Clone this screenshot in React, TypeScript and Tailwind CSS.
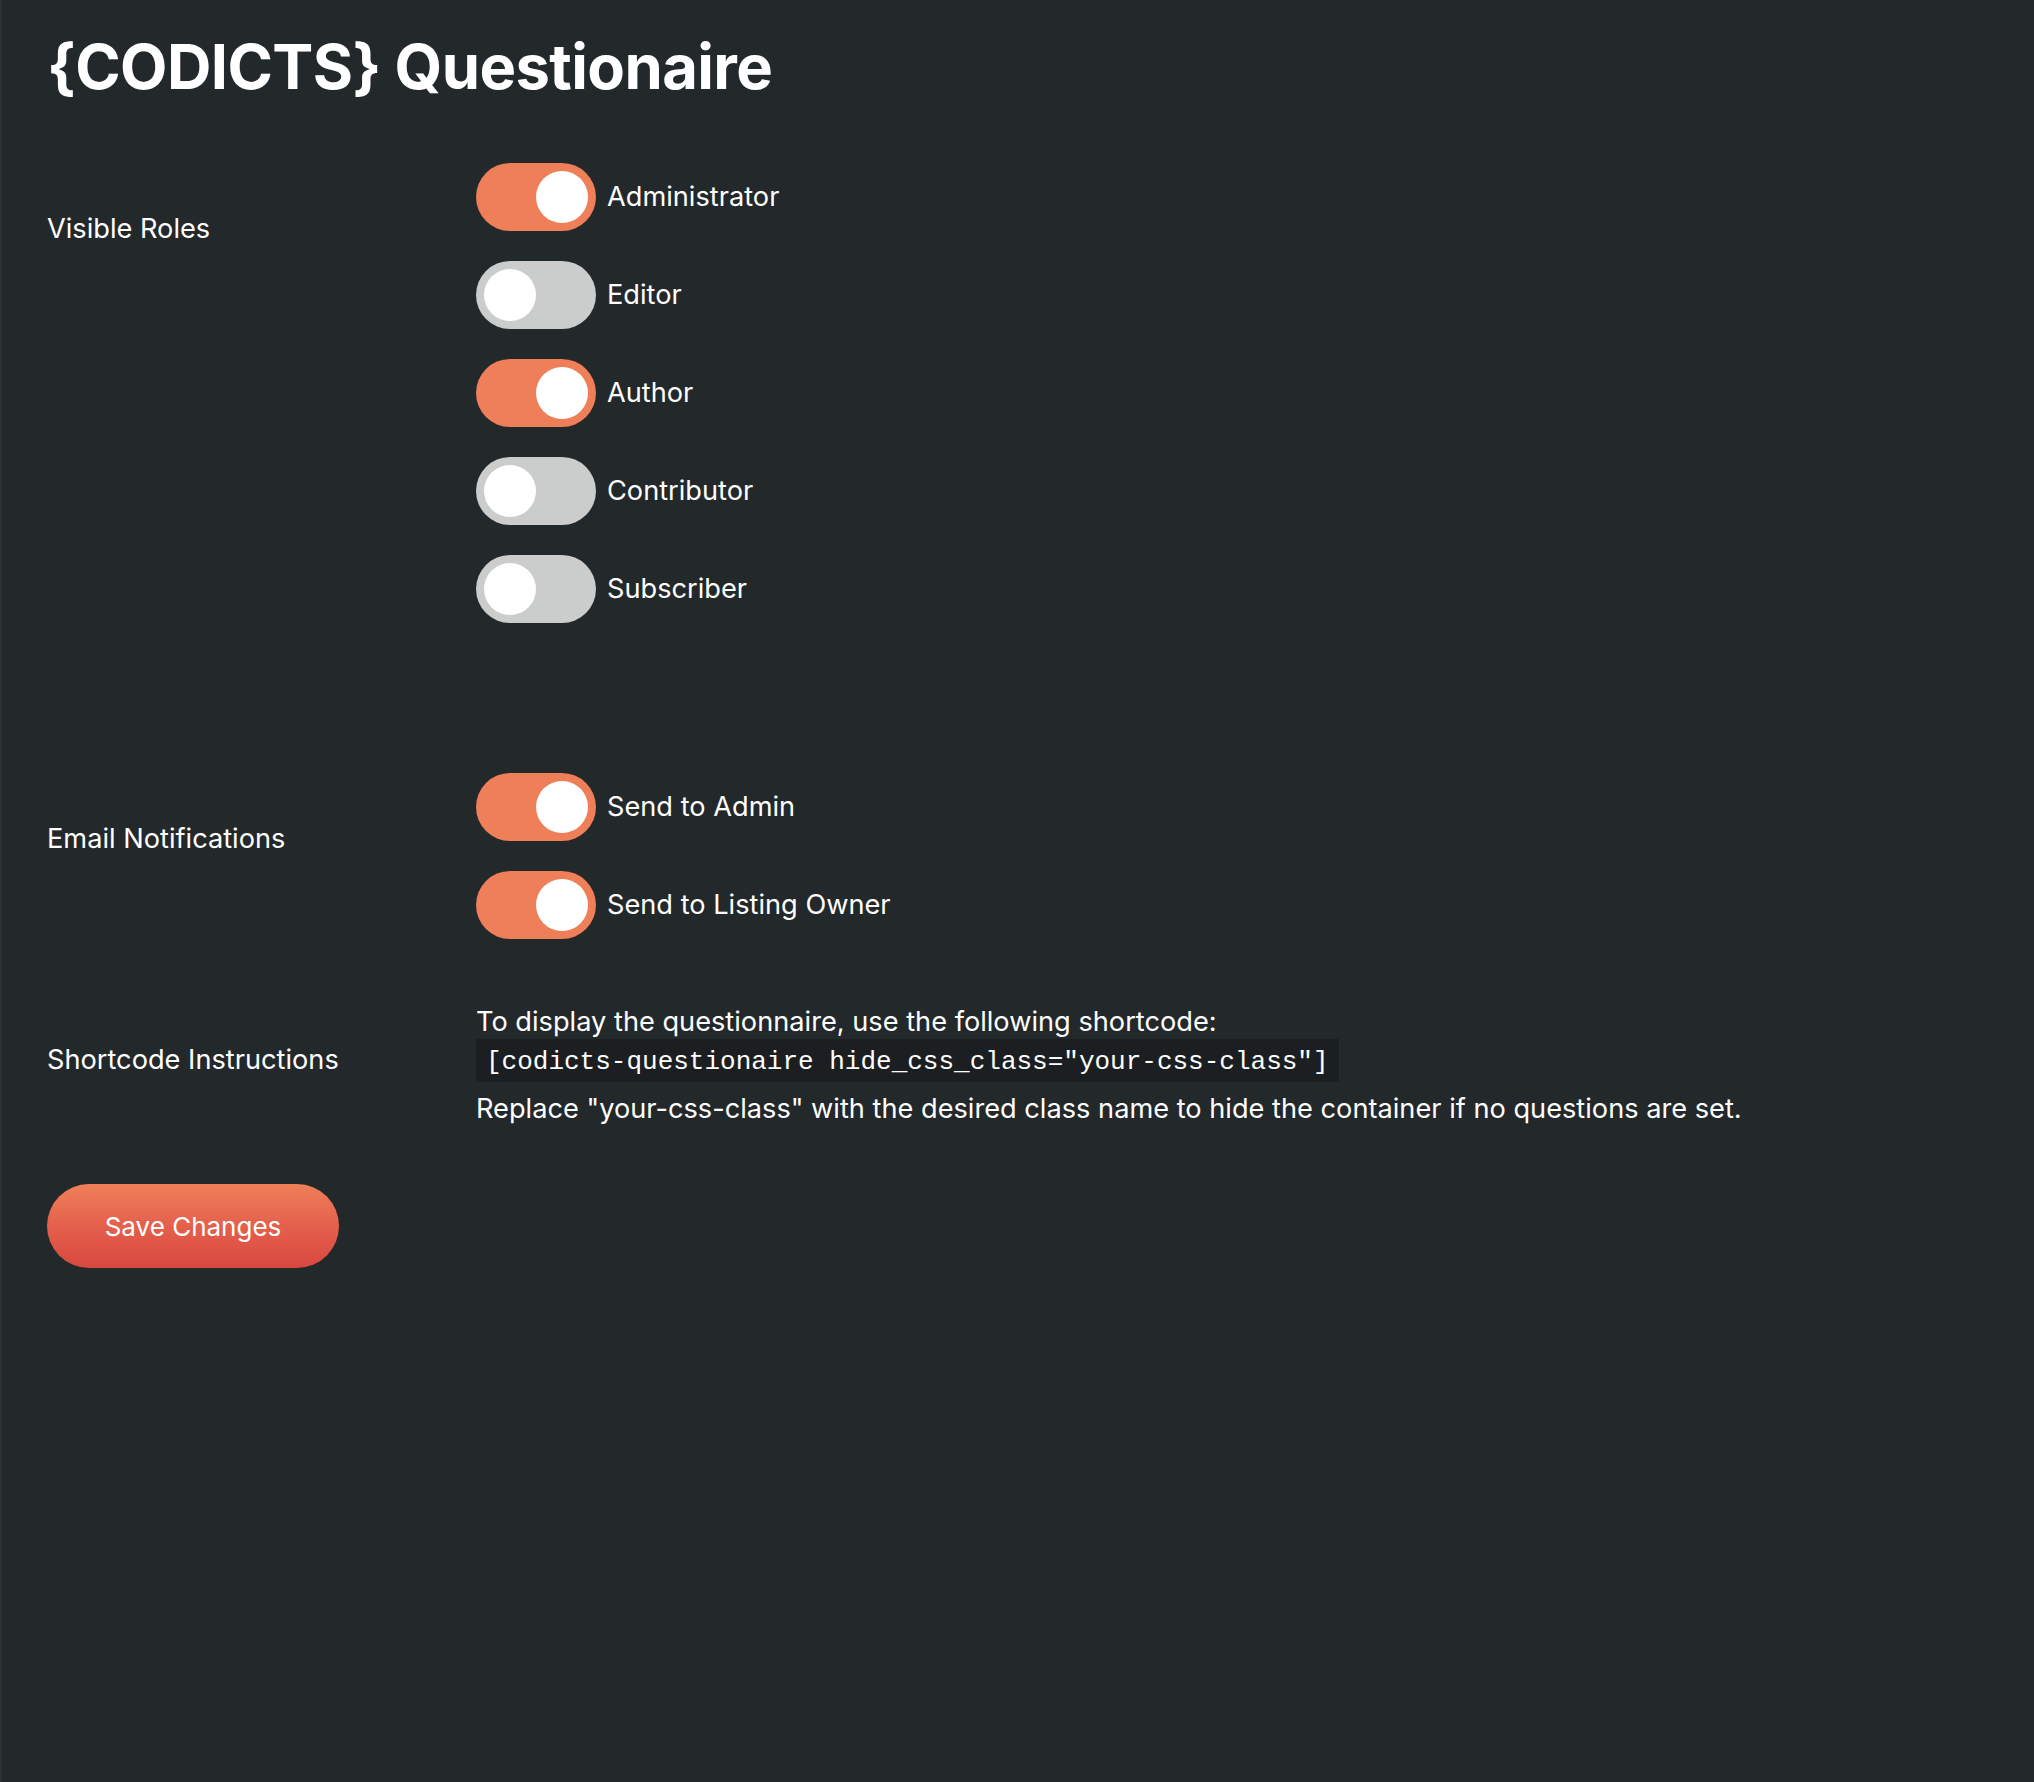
import React, { useState } from 'react';

// トグルの項目
const roleOptions = [
  { key: 'administrator', label: 'Administrator', on: true },
  { key: 'editor', label: 'Editor', on: false },
  { key: 'author', label: 'Author', on: true },
  { key: 'contributor', label: 'Contributor', on: false },
  { key: 'subscriber', label: 'Subscriber', on: false },
];

const emailOptions = [
  { key: 'admin', label: 'Send to Admin', on: true },
  { key: 'owner', label: 'Send to Listing Owner', on: true },
];

const Toggle: React.FC<{ label: string; checked: boolean; onChange: () => void }> = ({ label, checked, onChange }) => {
  return (
    <label className="flex items-center gap-[11px] cursor-pointer select-none">
      <button
        type="button"
        onClick={onChange}
        className={`flex h-[68px] w-[120px] shrink-0 items-center rounded-full px-[8px] ${
          checked ? 'justify-end bg-[#ef7f59]' : 'justify-start bg-[#cbcdcc]'
        }`}
      >
        <span className="block h-[52px] w-[52px] rounded-full bg-white" />
      </button>
      <span className="text-[27.2px] leading-[36px] text-white">{label}</span>
    </label>
  );
};

const App: React.FC = () => {
  const [roles, setRoles] = useState<Record<string, boolean>>(
    Object.fromEntries(roleOptions.map((r) => [r.key, r.on]))
  );
  const [emails, setEmails] = useState<Record<string, boolean>>(
    Object.fromEntries(emailOptions.map((e) => [e.key, e.on]))
  );

  return (
    <div className="min-h-screen bg-[#23282b] border-l-2 border-[#2a2f32] pl-[45px] font-['Inter','Noto_Sans',sans-serif] text-white">
      <h1 className="pt-[35px] text-[61.5px] font-bold leading-[64px] tracking-[-0.6px] text-white">
        {'{CODICTS}'} Questionaire
      </h1>

      {/* Visible Roles */}
      <div className="mt-[64px] flex">
        <div className="w-[429px] shrink-0 pt-[48px] text-[27.2px] leading-[36px]">Visible Roles</div>
        <div className="flex flex-col gap-[30px]">
          {roleOptions.map((r) => (
            <Toggle
              key={r.key}
              label={r.label}
              checked={roles[r.key]}
              onChange={() => setRoles((prev) => ({ ...prev, [r.key]: !prev[r.key] }))}
            />
          ))}
        </div>
      </div>

      {/* Email Notifications */}
      <div className="mt-[150px] flex">
        <div className="w-[429px] shrink-0 pt-[48px] text-[27.2px] leading-[36px]">Email Notifications</div>
        <div className="flex flex-col gap-[30px]">
          {emailOptions.map((e) => (
            <Toggle
              key={e.key}
              label={e.label}
              checked={emails[e.key]}
              onChange={() => setEmails((prev) => ({ ...prev, [e.key]: !prev[e.key] }))}
            />
          ))}
        </div>
      </div>

      {/* Shortcode Instructions */}
      <div className="mt-[65px] flex">
        <div className="w-[429px] shrink-0 pt-[38px] text-[27.2px] leading-[36px]">Shortcode Instructions</div>
        <div className="flex flex-col items-start text-[27.2px] leading-[36px]">
          <p>To display the questionnaire, use the following shortcode:</p>
          <code className="-mt-[1px] block bg-[#1c1f21] px-[10px] pt-[7px] pb-[4px] font-['Liberation_Mono',monospace] text-[26px] leading-[32px] text-white">
            [codicts-questionaire hide_css_class="your-css-class"]
          </code>
          <p className="mt-[9px]">
            Replace "your-css-class" with the desired class name to hide the container if no questions are set.
          </p>
        </div>
      </div>

      <button
        type="button"
        className="mt-[57px] h-[84px] w-[292px] rounded-full bg-linear-to-b from-[#ef7f59] via-[#e4604c] to-[#d9473f] text-[26px] text-white"
      >
        Save Changes
      </button>
    </div>
  );
};

export default App;
